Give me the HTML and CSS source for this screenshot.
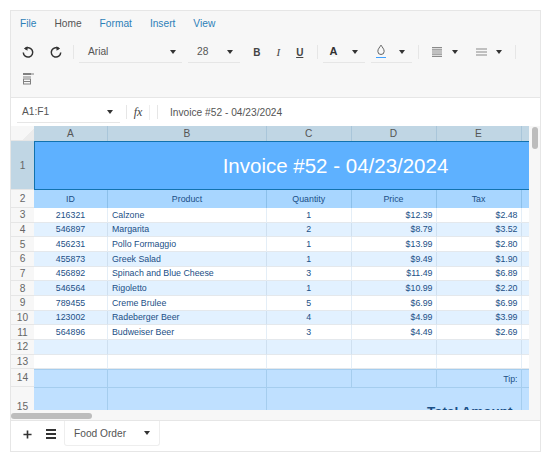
FILE: index.html
```html
<!DOCTYPE html>
<html lang="en">
<head>
    <meta charset="UTF-8">
    <title>Food Order</title>
    <link rel="stylesheet" href="styles.css">
</head>
<body>
    <div class="spreadsheet">
        <div class="menu">
            <span>File</span>
            <span class="active">Home</span>
            <span>Format</span>
            <span>Insert</span>
            <span>View</span>
        </div>

        <div class="toolbar">
            <button class="tool undo"><svg viewBox="0 0 16 16"><path d="M4.4 4.4A5.4 5.4 0 1 1 2.6 8.6" /><path class="fill" d="M7.4 1.4v5.2L3.4 4z" /></svg></button>
            <button class="tool redo"><svg viewBox="0 0 16 16"><path d="M11.6 4.4A5.4 5.4 0 1 0 13.4 8.6" /><path class="fill" d="M8.6 1.4v5.2l4-2.6z" /></svg></button>
            <i class="sep sep-history"></i>
            <div class="select font-select"><span>Arial</span><b class="caret"></b></div>
            <div class="select size-select"><span>28</span><b class="caret"></b></div>
            <button class="tool letter bold">B</button>
            <button class="tool letter italic">I</button>
            <button class="tool letter underline">U</button>
            <i class="sep sep-style"></i>
            <div class="select color-select">
                <span class="color-a">A</span><b class="caret"></b>
            </div>
            <div class="select color-select fill-select">
                <svg class="drop" viewBox="0 0 12 14"><path d="M6 1.2C4.6 3.6 2.2 5.8 2.2 8.6a3.8 3.8 0 0 0 7.6 0C9.8 5.8 7.4 3.6 6 1.2z" /></svg>
                <b class="caret"></b>
            </div>
            <i class="sep sep-fill"></i>
            <div class="icon-drop align-drop">
                <svg viewBox="0 0 10 10"><path d="M0 .6h10M0 2.8h10M0 5h10M0 7.2h10M0 9.4h10" /></svg>
                <b class="caret"></b>
            </div>
            <div class="icon-drop valign-drop">
                <svg viewBox="0 0 11 8"><path d="M0 1h11M0 4h11M0 7h11" /></svg>
                <b class="caret"></b>
            </div>
            <i class="sep sep-last"></i>
            <button class="tool wrap"><svg viewBox="0 0 11 12"><path d="M0 1h8" stroke-width="2" /><path d="M8 1h3M0 4h8" /><rect x=".5" y="6" width="7" height="5" /><path d="M0 8.5h8" /></svg></button>
        </div>

        <div class="formula">
            <div class="select name-box"><span>A1:F1</span><b class="caret"></b></div>
            <i class="sep"></i>
            <span class="fx">fx</span>
            <i class="sep sep-fx"></i>
            <span class="formula-text">Invoice #52 - 04/23/2024</span>
        </div>

        <div class="sheet-area">
            <div class="sheet">
                <div class="row head-row">
                    <div class="cell num corner"></div>
                    <div class="cell col-a head">A</div>
                    <div class="cell col-b head">B</div>
                    <div class="cell col-c head">C</div>
                    <div class="cell col-d head">D</div>
                    <div class="cell col-e head">E</div>
                    <div class="cell col-f head"></div>
                </div>
                <div class="row title-row">
                    <div class="cell num title-num">1</div>
                    <div class="cell title">Invoice #52 - 04/23/2024</div>
                </div>
                <div class="row col-names">
                    <div class="cell num">2</div>
                    <div class="cell col-a center">ID</div>
                    <div class="cell col-b center">Product</div>
                    <div class="cell col-c center">Quantity</div>
                    <div class="cell col-d center">Price</div>
                    <div class="cell col-e center">Tax</div>
                    <div class="cell col-f"></div>
                </div>
                <div class="row item">
                    <div class="cell num">3</div>
                    <div class="cell col-a center">216321</div>
                    <div class="cell col-b">Calzone</div>
                    <div class="cell col-c center">1</div>
                    <div class="cell col-d right">$12.39</div>
                    <div class="cell col-e right">$2.48</div>
                    <div class="cell col-f"></div>
                </div>
                <div class="row item alt">
                    <div class="cell num">4</div>
                    <div class="cell col-a center">546897</div>
                    <div class="cell col-b">Margarita</div>
                    <div class="cell col-c center">2</div>
                    <div class="cell col-d right">$8.79</div>
                    <div class="cell col-e right">$3.52</div>
                    <div class="cell col-f"></div>
                </div>
                <div class="row item">
                    <div class="cell num">5</div>
                    <div class="cell col-a center">456231</div>
                    <div class="cell col-b">Pollo Formaggio</div>
                    <div class="cell col-c center">1</div>
                    <div class="cell col-d right">$13.99</div>
                    <div class="cell col-e right">$2.80</div>
                    <div class="cell col-f"></div>
                </div>
                <div class="row item alt">
                    <div class="cell num">6</div>
                    <div class="cell col-a center">455873</div>
                    <div class="cell col-b">Greek Salad</div>
                    <div class="cell col-c center">1</div>
                    <div class="cell col-d right">$9.49</div>
                    <div class="cell col-e right">$1.90</div>
                    <div class="cell col-f"></div>
                </div>
                <div class="row item">
                    <div class="cell num">7</div>
                    <div class="cell col-a center">456892</div>
                    <div class="cell col-b">Spinach and Blue Cheese</div>
                    <div class="cell col-c center">3</div>
                    <div class="cell col-d right">$11.49</div>
                    <div class="cell col-e right">$6.89</div>
                    <div class="cell col-f"></div>
                </div>
                <div class="row item alt">
                    <div class="cell num">8</div>
                    <div class="cell col-a center">546564</div>
                    <div class="cell col-b">Rigoletto</div>
                    <div class="cell col-c center">1</div>
                    <div class="cell col-d right">$10.99</div>
                    <div class="cell col-e right">$2.20</div>
                    <div class="cell col-f"></div>
                </div>
                <div class="row item">
                    <div class="cell num">9</div>
                    <div class="cell col-a center">789455</div>
                    <div class="cell col-b">Creme Brulee</div>
                    <div class="cell col-c center">5</div>
                    <div class="cell col-d right">$6.99</div>
                    <div class="cell col-e right">$6.99</div>
                    <div class="cell col-f"></div>
                </div>
                <div class="row item alt">
                    <div class="cell num">10</div>
                    <div class="cell col-a center">123002</div>
                    <div class="cell col-b">Radeberger Beer</div>
                    <div class="cell col-c center">4</div>
                    <div class="cell col-d right">$4.99</div>
                    <div class="cell col-e right">$3.99</div>
                    <div class="cell col-f"></div>
                </div>
                <div class="row item">
                    <div class="cell num">11</div>
                    <div class="cell col-a center">564896</div>
                    <div class="cell col-b">Budweiser Beer</div>
                    <div class="cell col-c center">3</div>
                    <div class="cell col-d right">$4.49</div>
                    <div class="cell col-e right">$2.69</div>
                    <div class="cell col-f"></div>
                </div>
                <div class="row item alt">
                    <div class="cell num">12</div>
                    <div class="cell col-a"></div>
                    <div class="cell col-b"></div>
                    <div class="cell col-c"></div>
                    <div class="cell col-d"></div>
                    <div class="cell col-e"></div>
                    <div class="cell col-f"></div>
                </div>
                <div class="row item">
                    <div class="cell num">13</div>
                    <div class="cell col-a"></div>
                    <div class="cell col-b"></div>
                    <div class="cell col-c"></div>
                    <div class="cell col-d"></div>
                    <div class="cell col-e"></div>
                    <div class="cell col-f"></div>
                </div>
                <div class="row tip-row">
                    <div class="cell num">14</div>
                    <div class="cell col-a"></div>
                    <div class="cell col-b"></div>
                    <div class="cell col-c"></div>
                    <div class="cell col-d"></div>
                    <div class="cell col-e right">Tip:</div>
                    <div class="cell col-f"></div>
                </div>
                <div class="row total-row">
                    <div class="cell num">15</div>
                    <div class="cell col-a"></div>
                    <div class="cell col-b"></div>
                    <div class="cell col-total">Total Amount</div>
                    <div class="cell col-f"></div>
                </div>
            </div>
            <div class="v-scroll"><div class="v-thumb"></div></div>
        </div>

        <div class="h-scroll"><div class="h-thumb"></div></div>

        <div class="tabs">
            <button class="tab-btn plus"><svg viewBox="0 0 10 10"><path d="M5 .5v9M.5 5h9" /></svg></button>
            <button class="tab-btn list"><svg viewBox="0 0 10 10"><path d="M0 1h10M0 5h10M0 9h10" /></svg></button>
            <div class="sheet-tab"><span>Food Order</span><b class="caret"></b></div>
        </div>
    </div>
</body>
</html>
```
FILE: styles.css
```css
* {
    box-sizing: border-box;
}
body {
    margin: 10px;
    font-family: "Liberation Sans", Arial, sans-serif;
    background-color: white;
}
button {
    padding: 0;
    border: none;
    background: none;
    font-family: inherit;
}
.spreadsheet {
    width: 531px;
    height: 442px;
    border: 1px solid #e6e6e6;
    display: flex;
    flex-direction: column;
    overflow: hidden;
}
.caret {
    flex: none;
    width: 0;
    height: 0;
    border-left: 3px solid transparent;
    border-right: 3px solid transparent;
    border-top: 4px solid #333;
}

/* Menu */
.menu {
    height: 24px;
    flex: none;
    display: flex;
    align-items: center;
    padding-left: 9px;
    gap: 18px;
    font-size: 10.2px;
    color: #2d7fb8;
    background-color: #f7f7f7;
}
.menu .active {
    color: #555;
}

/* Toolbar */
.toolbar {
    height: 63px;
    flex: none;
    display: flex;
    flex-wrap: wrap;
    align-content: flex-start;
    align-items: center;
    padding-top: 3px;
    padding-left: 3px;
    background-color: #f7f7f7;
    border-bottom: 1px solid #e6e6e6;
}
.tool {
    width: 28px;
    height: 28px;
    display: flex;
    align-items: center;
    justify-content: center;
}
.tool svg {
    width: 14px;
    height: 14px;
    fill: none;
    stroke: #333;
    stroke-width: 1.7;
}
.tool svg .fill {
    fill: #333;
    stroke: none;
}
.sep {
    width: 1px;
    height: 14px;
    background-color: #e6e6e6;
    flex: none;
}
.toolbar .sep-history {
    margin: 0 5px 0 3px;
}
.select {
    height: 22px;
    display: flex;
    align-items: center;
    justify-content: space-between;
    border-bottom: 1px solid #e6e6e6;
    font-size: 10.2px;
    color: #555;
}
.font-select {
    width: 103px;
    padding: 0 6px 0 9px;
    margin-right: 6px;
}
.size-select {
    width: 52px;
    padding: 0 7px 0 9px;
}
.letter {
    width: 21.5px;
    font-size: 10px;
    color: #444;
}
.bold {
    font-weight: bold;
    margin-left: 6px;
}
.italic {
    font-family: "Liberation Serif", serif;
    font-style: italic;
    font-size: 11px;
}
.underline {
    font-weight: bold;
    text-decoration: underline;
}
.toolbar .sep-style {
    margin: 0 5px 0 6px;
}
.color-select {
    width: 42px;
    padding: 0 7px;
    margin-right: 6px;
}
.color-a {
    font-size: 11px;
    font-weight: bold;
    color: #333;
    border-bottom: 2px solid white;
}
.fill-select {
    width: 41px;
    padding-left: 5px;
}
.drop {
    width: 10px;
    height: 14px;
    fill: none;
    stroke: #555;
    stroke-width: 1.1;
    margin-bottom: 2px;
    padding-bottom: 1px;
    border-bottom: 1.5px solid #3fa0ff;
    overflow: visible;
}
.toolbar .sep-fill {
    margin: 0 13px 0 0;
}
.icon-drop {
    display: flex;
    align-items: center;
    height: 28px;
}
.icon-drop svg {
    fill: none;
    stroke: #8a8a8a;
    stroke-width: 1.2;
}
.align-drop svg {
    width: 10px;
    height: 10px;
    margin-right: 10px;
}
.valign-drop {
    margin-left: 18px;
}
.valign-drop svg {
    width: 11px;
    height: 8px;
    margin-right: 9px;
}
.toolbar .sep-last {
    margin: 0 0 0 13px;
}
.wrap {
    height: 26px;
}
.wrap svg {
    width: 11px;
    height: 12px;
    stroke: #808080;
    stroke-width: 1;
}

/* Formula bar */
.formula {
    height: 28px;
    flex: none;
    display: flex;
    align-items: center;
    padding-left: 6px;
    background-color: white;
}
.name-box {
    width: 103px;
    padding: 0 7px 0 5px;
    margin-right: 6px;
}
.fx {
    width: 23px;
    text-align: center;
    font-family: "Liberation Serif", serif;
    font-style: italic;
    font-size: 12px;
    color: #444;
    border-right: 1px solid #eee;
}
.sep-fx {
    margin-left: 7px;
}
.formula-text {
    margin-left: 12px;
    font-size: 10.2px;
    color: #555;
}

/* Sheet */
.sheet-area {
    height: 284px;
    flex: none;
    display: flex;
    overflow: hidden;
    background-color: #f7f7f7;
}
.sheet {
    width: 518px;
    flex: none;
    overflow: hidden;
}
.row {
    display: flex;
    height: 14.67px;
    font-size: 8.8px;
    color: #1a4f86;
    background-color: white;
}
.cell {
    flex: none;
    height: 100%;
    display: flex;
    align-items: center;
    padding: 0 4px;
    border-right: 1px solid #e4eef7;
    border-bottom: 1px solid #e4e8ec;
    white-space: nowrap;
}
.center {
    justify-content: center;
}
.right {
    justify-content: flex-end;
    padding-right: 3px;
}
.num {
    width: 23px;
    justify-content: center;
    padding: 0;
    font-size: 10.2px;
    color: #666;
    background-color: #f7f7f7;
    border-right: none;
    border-bottom: 1px solid #e6e6e6;
}
.col-a {
    width: 74px;
}
.col-b {
    width: 159px;
}
.col-c {
    width: 84.5px;
}
.col-d {
    width: 85px;
}
.col-e {
    width: 85px;
}
.col-f {
    width: 20px;
}
.col-total {
    width: 254.5px;
    justify-content: flex-end;
    align-items: flex-start;
    padding-top: 16px;
    padding-right: 8px;
    font-size: 13.5px;
    font-weight: bold;
}
.head-row {
    height: 15px;
    font-size: 10.2px;
    color: #555;
}
.head {
    justify-content: center;
    background-color: #c0d6e4;
    border-right: 1px solid #a9c6da;
    border-bottom: none;
}
.corner {
    background: linear-gradient(135deg, #f7f7f7 70%, #ececec 70%);
}
.title-row {
    height: 49px;
}
.title-num {
    background-color: #c0d6e4;
}
.title {
    width: 602px;
    justify-content: center;
    padding: 0;
    font-size: 20.5px;
    color: white;
    background-color: #5eb1ff;
    border: 1.5px solid #1272ae;
    border-right: none;
}
.col-names {
    height: 18px;
}
.col-names .cell:not(.num) {
    background-color: #a8d6ff;
    border-right-color: #8cc0ea;
    border-bottom: none;
}
.item .cell:not(.num) {
    border-bottom: 1px solid #e4e8ec;
}
.alt .cell:not(.num) {
    background-color: #e2f1ff;
    border-right-color: #cfe0f0;
}
.tip-row {
    height: 18px;
}
.total-row {
    height: 40px;
}
.tip-row .cell:not(.num),
.total-row .cell:not(.num) {
    background-color: #bfe0ff;
    border-right-color: #a5cdee;
    border-bottom: none;
    border-top: 1px solid #a5cdee;
}
.v-scroll {
    flex: 1;
    padding: 1px 2px;
}
.v-thumb {
    width: 6px;
    margin-left: 1px;
    height: 22px;
    border-radius: 3px;
    background-color: #bdbdbd;
}
.h-scroll {
    height: 11px;
    flex: none;
    padding-top: 3px;
    background-color: #f7f7f7;
    border-bottom: 1px solid #e6e6e6;
}
.h-thumb {
    width: 81px;
    height: 6px;
    border-radius: 3px;
    background-color: #bdbdbd;
}

/* Sheet tabs */
.tabs {
    flex: 1;
    display: flex;
    align-items: flex-start;
    padding-left: 7px;
    background-color: white;
}
.tab-btn {
    width: 19px;
    height: 26px;
    margin-right: 4px;
    display: flex;
    align-items: center;
    justify-content: center;
}
.tab-btn svg {
    stroke: #333;
    fill: none;
}
.plus svg {
    width: 9px;
    height: 9px;
    stroke-width: 1.8;
}
.list svg {
    width: 10px;
    height: 10px;
    stroke-width: 1.9;
}
.sheet-tab {
    width: 96px;
    height: 25px;
    display: flex;
    align-items: center;
    justify-content: space-between;
    padding: 0 9px;
    font-size: 10.2px;
    color: #555;
    border: 1px solid #eee;
    border-top: none;
    border-radius: 0 0 3px 3px;
}
```
